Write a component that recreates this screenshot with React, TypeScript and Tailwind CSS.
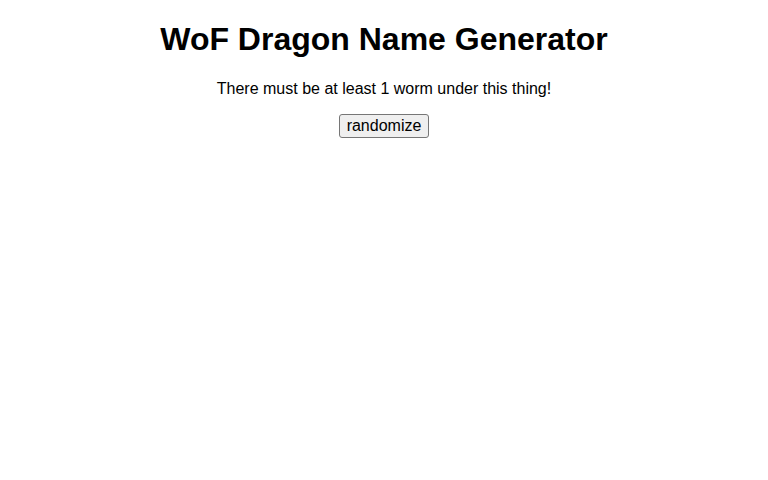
import { useState } from "react";

const messages = [
  "There must be at least 1 worm under this thing!",
];

export default function App() {
  const [msg, setMsg] = useState(messages[0]);

  return (
    <div className="min-h-screen bg-white text-black text-center font-['Liberation_Sans',Arial,sans-serif]">
      <h1 className="pt-[21px] pb-[22px] text-[32px] leading-[37px] font-bold">
        WoF Dragon Name Generator
      </h1>
      <p className="mb-4 text-base leading-[18px]">{msg}</p>
      <button
        onClick={() => setMsg(messages[Math.floor(Math.random() * messages.length)])}
        className="px-[7px] py-[2px] text-base leading-[18px] bg-[#efefef] border border-[#767676] rounded-[3px] hover:bg-[#e5e5e5]"
      >
        randomize
      </button>
    </div>
  );
}
